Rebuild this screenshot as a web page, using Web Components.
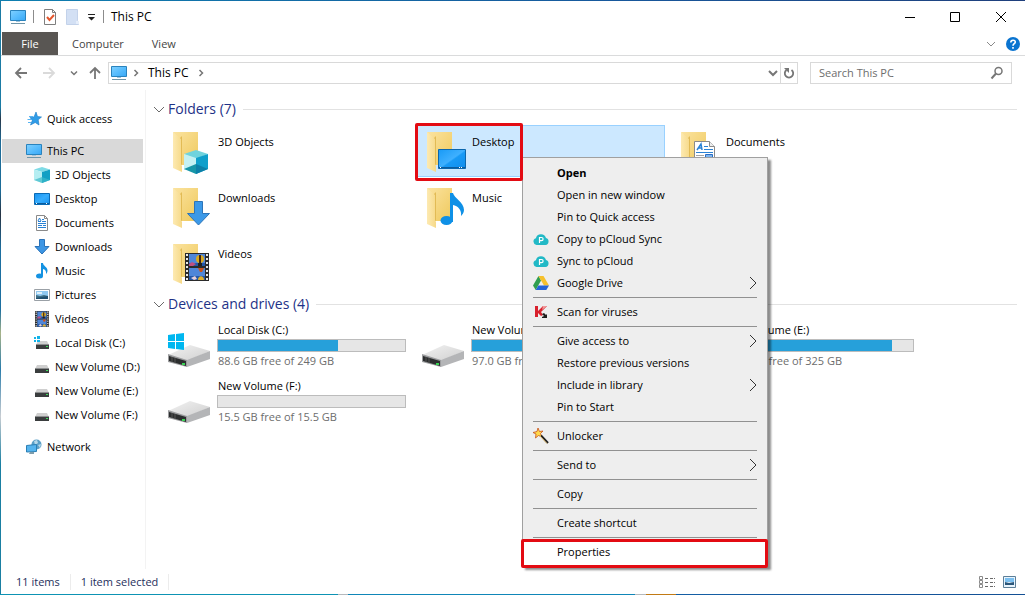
<!DOCTYPE html>
<html lang="en">
<head>
<meta charset="utf-8">
<meta name="viewport" content="width=device-width, initial-scale=1">
<title>This PC</title>
<style>
    body {
        margin: 0;
        font-family: "Open Sans", "Noto Sans", sans-serif;
        font-size: 11px;
        line-height: 16px;
        color: #000;
        background: #fff;
    }
</style>
</head>
<body>
<explorer-window>
    <title-bar slot="title">This PC</title-bar>
    <ribbon-tabs slot="ribbon"></ribbon-tabs>
    <address-row slot="address">This PC</address-row>

    <nav-pane slot="nav">
        <nav-item icon="star">Quick access</nav-item>
        <nav-item icon="pc" selected class="group">This PC</nav-item>
        <nav-item icon="cube" child>3D Objects</nav-item>
        <nav-item icon="desktop" child>Desktop</nav-item>
        <nav-item icon="document" child>Documents</nav-item>
        <nav-item icon="download" child>Downloads</nav-item>
        <nav-item icon="music" child>Music</nav-item>
        <nav-item icon="picture" child>Pictures</nav-item>
        <nav-item icon="video" child>Videos</nav-item>
        <nav-item icon="drive-win" child>Local Disk (C:)</nav-item>
        <nav-item icon="drive" child>New Volume (D:)</nav-item>
        <nav-item icon="drive" child>New Volume (E:)</nav-item>
        <nav-item icon="drive" child>New Volume (F:)</nav-item>
        <nav-item icon="network" class="group">Network</nav-item>
    </nav-pane>

    <item-group heading="Folders (7)">
        <folder-tile icon="f-cube">3D Objects</folder-tile>
        <folder-tile icon="f-desktop" selected>Desktop</folder-tile>
        <folder-tile icon="f-document">Documents</folder-tile>
        <folder-tile icon="f-download">Downloads</folder-tile>
        <folder-tile icon="f-music">Music</folder-tile>
        <folder-tile icon="f-picture">Pictures</folder-tile>
        <folder-tile icon="f-video">Videos</folder-tile>
    </item-group>
    <item-group heading="Devices and drives (4)">
        <drive-tile icon="big-drive-win" name="Local Disk (C:)" used="64">88.6 GB free of 249 GB</drive-tile>
        <drive-tile icon="big-drive" name="New Volume (D:)" used="70">97.0 GB free of 325 GB</drive-tile>
        <drive-tile icon="big-drive" name="New Volume (E:)" used="89">35.7 GB free of 325 GB</drive-tile>
        <drive-tile icon="big-drive" name="New Volume (F:)" used="0">15.5 GB free of 15.5 GB</drive-tile>
    </item-group>

    <status-bar slot="status">
        <span>11 items</span>
        <span>1 item selected</span>
    </status-bar>

    <context-menu slot="menu">
        <menu-item default>Open</menu-item>
        <menu-item>Open in new window</menu-item>
        <menu-item>Pin to Quick access</menu-item>
        <menu-item icon="pcloud">Copy to pCloud Sync</menu-item>
        <menu-item icon="pcloud">Sync to pCloud</menu-item>
        <menu-item icon="gdrive" submenu>Google Drive</menu-item>
        <hr>
        <menu-item icon="kaspersky">Scan for viruses</menu-item>
        <hr>
        <menu-item submenu>Give access to</menu-item>
        <menu-item>Restore previous versions</menu-item>
        <menu-item submenu>Include in library</menu-item>
        <menu-item>Pin to Start</menu-item>
        <hr>
        <menu-item icon="wand">Unlocker</menu-item>
        <hr>
        <menu-item submenu>Send to</menu-item>
        <hr>
        <menu-item>Copy</menu-item>
        <hr>
        <menu-item>Create shortcut</menu-item>
        <hr>
        <menu-item marked>Properties</menu-item>
    </context-menu>
</explorer-window>

<script>
// folder base shared by the 48px folder icons
const folder = `
    <defs>
        <linearGradient id="back" x1="0" y1="0" x2="1" y2="1"><stop offset="0" stop-color="#fbe3a0"/><stop offset="1" stop-color="#efc95c"/></linearGradient>
        <linearGradient id="front" x1="0" y1="0" x2="1" y2="0"><stop offset="0" stop-color="#fdeab2"/><stop offset="1" stop-color="#f6d988"/></linearGradient>
    </defs>
    <path fill="url(#back)" d="M9 4h25v33H17z"/>
    <path fill="#e2bb55" d="M16 10l2-2v29h-2z"/>
    <path fill="url(#front)" d="M9 4l8 7v25l1 2v6L9 40z"/>`;

const bigDrive = `
    <defs><linearGradient id="top" x1="0" y1="0" x2="1" y2="1"><stop offset="0" stop-color="#f2f2f2"/><stop offset="1" stop-color="#cfcfcf"/></linearGradient></defs>
    <path fill="url(#top)" d="M4 33L26 23l20 6-23 10z"/>
    <path fill="#b4b5b7" d="M23 38l23-9v8L23 45z"/>
    <path fill="#9b9c9e" d="M4 32l19 6v7L4 40z"/>
    <path fill="#2c2e2f" d="M5 34l17 5v5L5 39z"/>
    <path fill="#4e5152" d="M8 35v5M11 36v5" stroke="#555"/>
    <path fill="#39d353" d="M18 41h3v2h-3z"/>`;

const winLogo = '<path fill="#00b7f0" d="M4 13l7-1v7H4zM12 12l8-1v8h-8zM4 20h7v7l-7-1zM12 20h8v8l-8-1z"/>';

const film = `
    <path fill="#2b2b2b" d="M0 0h24v28H0z"/>
    <path fill="#4f86d8" d="M4 1h16v12H4zM4 15h16v12H4z"/>
    <path fill="#2458a8" d="M4 10h16v3H4zM4 23h16v4H4z"/>
    <circle cx="15" cy="6" r="4" fill="#d8a820"/><path fill="#3a2418" d="M14 2h2v8h-2z"/><path fill="#222" d="M13 10h4v3h-4z"/>
    <path fill="#c8541c" d="M13 15h6l-2 4h-2z"/><path fill="#e0b030" d="M13 27c0-5 6-5 6 0z"/>
    <path fill="#c05080" d="M4 11l3-2 4 2-3 2H4z"/><path fill="#e8d0d8" d="M6 25l4-2 2 3-3 1z"/>
    <path stroke="#e9e9e9" stroke-width="2" stroke-dasharray="2 2" d="M2 1v27M22 1v27"/>`;

const ICONS = {
    pc: [16, `
        <defs><linearGradient id="g" x1="0" y1="0" x2="1" y2="1"><stop offset="0" stop-color="#7fd0ff"/><stop offset=".5" stop-color="#59bdfd"/><stop offset="1" stop-color="#38a7f5"/></linearGradient></defs>
        <path fill="url(#g)" stroke="#2a83bd" d="M.5 1.500h15v10H.5z"/>
        <path fill="#9fc4dc" d="M6 12h4v1H6z"/><path fill="#6f95a8" d="M1 14h14v1H1z"/>`],
    star: [16, `
        <path fill="#2f9de8" stroke="#1a79c4" stroke-width=".6" d="M10 1l1.500 4.500 4 .5-3.300 2.800.8 5.200-3.800-2.500L4.500 14l1.800-4.500L4 6.500l4-.5z"/>
        <path fill="none" stroke="#56b4f2" d="M3 5.500h4M1.500 8.500h4M2 11.500h3"/>`],
    cube: [16, `
        <path fill="#7fdbe6" d="M8 0l8 2.500L8 5 0 2.500z"/><path fill="#b5eef2" d="M0 2.500L8 5v11l-8-3z"/>
        <path fill="#12a0c4" d="M16 2.500L8 5v11l8-3z"/><path fill="#3cb9c9" d="M0 13l8-3v6zM8 10l8 3-8 3z" opacity=".7"/>`],
    desktop: [16, `
        <defs><linearGradient id="g" x1="0" y1="0" x2="1" y2="1"><stop offset="0" stop-color="#1792f0"/><stop offset=".5" stop-color="#36adfd"/><stop offset="1" stop-color="#1792f0"/></linearGradient></defs>
        <path fill="url(#g)" stroke="#0a6bb5" d="M.5 2.500h15v11H.5z"/><path fill="#0a5c9c" d="M1 12h14v1H1z"/><path fill="#fff" d="M2 12h1v1H2zM12 12h1v1h-1z"/>`],
    document: [16, `
        <path fill="#fff" stroke="#8a8a8a" d="M2.500.5h8l3 3v12h-11z"/><path fill="none" stroke="#8a8a8a" d="M10.500.5v3h3"/>
        <path stroke="#2a82d4" d="M4 6.500h3M8 4.500h2M8 6.500h4M4 8.500h8M4 10.500h4M9 10.500h3M4 12.500h8"/><path fill="none" stroke="#2a82d4" d="M4 6l1.500-3L7 6"/>`],
    download: [16, '<path fill="#3d96e4" stroke="#2a72b8" d="M5.500.5h5v7h4.500L8 15 1 7.500h4.500z"/>'],
    music: [16, '<ellipse cx="5.500" cy="13" rx="3.500" ry="2.500" fill="#1492e2"/><path fill="#1492e2" d="M7 0h2c0 3 5 4 4.500 8-.2 1.500-1 2.500-1.500 3 .5-3-1-4.500-3-5v7H7z"/>'],
    picture: [16, `
        <path fill="#fff" stroke="#9aa0a6" d="M.5 2.500h15v11H.5z"/><path fill="#8fc8f0" d="M2 4h12v8H2z"/>
        <path fill="#dff1fb" d="M3 5h5v2H3z"/><path fill="#3e6f86" d="M2 8l4 1 4-1 4 1v3H2z"/><path fill="#1f4f70" d="M2 11l12-2v3H2z"/>`],
    video: [16, `<g transform="translate(1 0) scale(.58 .57)">${film}</g>`],
    drive: [16, `
        <path fill="#cfcfcf" d="M3 6h10l2 4H1z"/><path fill="#3a3d3e" d="M1 10h14v4H1z"/>
        <path fill="#8d8f90" d="M1 9h14v1H1z"/><path fill="#3fdc5c" d="M12 11h2v1h-2z"/>`],
    'drive-win': [16, `
        <path fill="#cfcfcf" d="M4 6h9l2 4H2z"/><path fill="#3a3d3e" d="M2 10h13v4H2z"/>
        <path fill="#8d8f90" d="M2 9h13v1H2z"/><path fill="#3fdc5c" d="M12 11h2v1h-2z"/>
        <path fill="#12b3e8" d="M0 2h2v2H0zM3 1h3v3H3zM0 5h2v2H0zM3 5h3v2H3z"/>`],
    network: [16, `
        <circle cx="10.500" cy="5.500" r="5" fill="#5b9fc6"/><path fill="#b6d9ea" d="M8 2l3-1 1 3-3 2zM12 6l3-1-1 4z"/>
        <path fill="#55b4ee" stroke="#2b7fb4" d="M.5 6.500l10-1v7l-10 .5z"/><path fill="#7f9dac" d="M4 13h4v2H3z"/>`],
    check: [16, '<path fill="#fff" stroke="#7e7e7e" d="M2.500.5h8l3 3v12h-11z"/><path fill="none" stroke="#7e7e7e" d="M10.500.5v3h3"/><path fill="none" stroke="#e4572e" stroke-width="2" d="M5 8l2.500 3L12 6"/>'],
    blank: [16, '<path fill="#d3e0f4" stroke="#c3d2ea" d="M1.500.5h11v11l1 1v3h-12z"/><path fill="#e6eefa" d="M11 12h3v3h-3z"/>'],
    customize: [8, '<path fill="#222" d="M0 1h7v1H0zM0 4h7L3.500 7.500z"/>'],
    back: [14, '<path fill="none" stroke="#767676" stroke-width="1.800" d="M7 2L2 7l5 5M2 7h11"/>'],
    forward: [14, '<path fill="none" stroke="#dadada" stroke-width="1.800" d="M7 2l5 5-5 5M12 7H1"/>'],
    up: [14, '<path fill="none" stroke="#767676" stroke-width="1.800" d="M2 7l5-5 5 5M7 2v11"/>'],
    down: [10, '<path fill="none" stroke="#767676" stroke-width="2" d="M1 3l4 4 4-4"/>'],
    'down-small': [8, '<path fill="none" stroke="#767676" stroke-width="1.500" d="M1 2.500l3 3 3-3"/>'],
    'down-thin': [10, '<path fill="none" stroke="#8a8a8a" d="M1 3l4 4 4-4"/>'],
    'group-arrow': [12, '<path fill="none" stroke="#6a6a6a" d="M1 4l5 5 5-5"/>'],
    crumb: [8, '<path fill="none" stroke="#767676" stroke-width="1.500" d="M2.500 1l3 3-3 3"/>'],
    refresh: [12, '<path fill="none" stroke="#767676" stroke-width="1.800" d="M8.500 3A4.200 4.200 0 1 1 3.500 3"/><path fill="#767676" d="M1 1h5v5z"/>'],
    search: [14, '<circle cx="8.500" cy="5" r="3.500" fill="none" stroke="#767676" stroke-width="1.500"/><path stroke="#767676" stroke-width="2" d="M6 7.500L1.500 12.500"/>'],
    help: [14, '<circle cx="7" cy="7" r="7" fill="#0a74d0"/><path fill="none" stroke="#fff" stroke-width="1.600" d="M4.800 5.500c0-3 4.500-3 4.500-.5C9.300 6.800 7 6.600 7 8.800M7 10v1.800"/>'],
    minimize: [12, '<path fill="#000" d="M1 6h10v1H1z"/>'],
    maximize: [12, '<path fill="none" stroke="#000" d="M.5 1.500h9v9h-9z"/>'],
    close: [12, '<path fill="none" stroke="#000" d="M0 1l10 10M10 1L0 11"/>'],
    submenu: [14, '<path fill="none" stroke="#333" d="M4 1l6 6-6 6"/>'],
    pcloud: [16, '<path fill="#22b9c6" d="M3.500 14a3.500 3.500 0 0 1-.6-6.800A5.200 5.200 0 0 1 13 7a3.600 3.600 0 0 1-.5 7z"/><path fill="none" stroke="#fff" stroke-width="1.200" d="M6.500 12V6.500h2a1.600 1.600 0 0 1 0 3.200h-2"/>'],
    gdrive: [16, '<path fill="#2f9e4f" d="M5.500 1L8 5.500 2.700 15 0 10.500z"/><path fill="#f6c02c" d="M5.500 1h5L16 10.500h-5z"/><path fill="#2463d8" d="M5.300 10.500H16L13.300 15H2.700z"/>'],
    kaspersky: [16, '<path fill="#d8202c" d="M2 2h3v5l5-5h4L8 8l2 3-2 1-3-3v4H2z"/><path fill="#f29a9a" d="M10 2h4L9 6z"/><path fill="#1e1e1e" d="M9 13l2-1-2-2 2-1 2 2 1-1v4H9z"/>'],
    wand: [16, '<path fill="#ffd84a" stroke="#c8501c" stroke-width=".8" d="M5 0l1.500 3.500L10 3 7.500 5.500 9 9 5.500 7.500 2.500 10l.5-4L0 4.500l4-1z"/><path stroke="#222" stroke-width="2" d="M8 7.500L15 15"/><path stroke="#d7b46a" d="M7 8l7 7.500"/>'],
    details: [16, '<path fill="none" stroke="#8a8a8a" d="M.5 2.500h3v3h-3zM.5 6.500h3v3h-3zM.5 10.500h3v3h-3z"/><path stroke="#6a6a6a" stroke-dasharray="3 1" d="M6 4.500h4M11 4.500h5M6 8.500h4M11 8.500h5M6 12.500h4M11 12.500h5"/>'],
    thumbs: [16, '<path fill="#e8f4fd" stroke="#5d7f98" d="M1.500 2.500h12v11h-12z"/><path fill="#7cc0f0" d="M3 4h9v4H3z"/><path fill="#2b567a" d="M3 8l4 1 5-1v3H3z"/>'],

    'f-cube': [48, folder + `
        <path fill="#6fd3dd" d="M32 22l12 4-12 5-12-5z"/><path fill="#c4f1f3" d="M20 26l12 4v9l-12 3z"/>
        <path fill="#0f9fcb" d="M44 26l-12 4v16l12-5z"/><path fill="#1796a8" d="M20 41l12-5v10z"/><path fill="#0c80a8" d="M32 36l12 5-12 5z"/>`],
    'f-desktop': [48, folder + `
        <defs><linearGradient id="g" x1="0" y1="0" x2="1" y2="1"><stop offset="0" stop-color="#189af6"/><stop offset=".5" stop-color="#3fb0ff"/><stop offset=".55" stop-color="#189af6"/><stop offset="1" stop-color="#0f8cec"/></linearGradient></defs>
        <path fill="url(#g)" stroke="#0b66ad" d="M20.500 21.500h27v19h-27z"/><path fill="#0b5c9e" d="M21 39h26v1H21z"/><path fill="#fff" d="M22 39h1v1h-1zM41 39h1v1h-1zM43 39h1v1h-1z"/>`],
    'f-document': [48, folder + `
        <path fill="#fff" stroke="#8a8a8a" d="M22.500 13.500h15l5 5v26h-20z"/><path fill="#eee" stroke="#8a8a8a" d="M37.500 13.500v5h5"/>
        <path fill="none" stroke="#2a82d4" stroke-width="1.500" d="M25 22l4-6 1 6M26 20h4"/><path stroke="#2a82d4" d="M32 18.500h4M32 21.500h9M24 24.500h17M24 30.500h17M24 33.500h17M24 36.500h17"/><path stroke="#a5a5a5" d="M24 27.500h8"/><path fill="#7db5ee" stroke="#2a6cc4" d="M33.500 26.500h7v4h-7z"/>`],
    'f-download': [48, folder + '<path fill="#3b99e8" stroke="#2d74b8" d="M30.500 17.500h8v12h7L34.500 41l-11-11.500h7z"/>'],
    'f-music': [48, folder + '<ellipse cx="28.500" cy="36.500" rx="6" ry="4.500" fill="#0f90e6"/><path fill="#0f90e6" d="M32 9h3c1 5 11 9 11 17 0 3-2 5-3 6 1-6-3-10-8-11v17h-3z"/>'],
    'f-picture': [48, folder + '<path fill="#fff" stroke="#9aa0a6" d="M20.500 21.500h26v19h-26z"/><path fill="#8fc8f0" d="M22 23h23v9H22z"/><path fill="#3e6f86" d="M22 31h23v8H22z"/>'],
    'f-video': [48, folder + `<g transform="translate(21 13)">${film}</g>`],
    'big-drive': [48, bigDrive],
    'big-drive-win': [48, bigDrive + winLogo]
};

function svg(name) {
    const [size, shapes] = ICONS[name];
    return `<svg width="${size}" height="${size}" viewBox="0 0 ${size} ${size}" aria-hidden="true">${shapes}</svg>`;
}

class UiIcon extends HTMLElement {
    constructor() {
        super();
        this.attachShadow({ mode: 'open' });
    }

    connectedCallback() {
        this.shadowRoot.innerHTML = `
            <style>
                :host { display: inline-flex; flex: none; }
                svg { display: block; }
            </style>
            ${svg(this.getAttribute('name'))}
        `;
    }
}

class ExplorerWindow extends HTMLElement {
    constructor() {
        super();
        this.attachShadow({ mode: 'open' });
    }

    connectedCallback() {
        this.shadowRoot.innerHTML = `
            <style>
                /* the desktop shows through as a thin line on three sides */
                :host {
                    display: flex;
                    flex-direction: column;
                    position: relative;
                    box-sizing: border-box;
                    min-height: 100vh;
                    padding: 1px 0 1px 1px;
                    background:
                        linear-gradient(90deg, #0e7fb0, #17589c 60%, #1f3f7c) top / 100% 1px no-repeat,
                        linear-gradient(90deg, #0d93b4 0 33%, #b5b9bd 33% 34%, #0f86b8 34% 62%, #b5b9bd 62% 63%, #c27a14 63% 66%, #155fa5 66%, #134f94) bottom / 100% 1px no-repeat,
                        linear-gradient(#1b7ba4 0 18%, #27374a 20%, #1d6c98 24% 32%, #263242 36%, #1d6fa0 42% 52%, #a9b489 56%, #2a7cab 62%, #c8cdd2 70%, #1a7fa2 78%) left / 1px 100% no-repeat,
                        #fff;
                }
                .body {
                    display: flex;
                    flex: 1;
                }
                main {
                    flex: 1;
                    min-width: 0;
                    padding: 8px 8px 8px 7px;
                }
            </style>
            <slot name="title"></slot>
            <slot name="ribbon"></slot>
            <slot name="address"></slot>
            <div class="body">
                <slot name="nav"></slot>
                <main><slot></slot></main>
            </div>
            <slot name="status"></slot>
            <slot name="menu"></slot>
        `;
    }
}

class TitleBar extends HTMLElement {
    constructor() {
        super();
        this.attachShadow({ mode: 'open' });
    }

    connectedCallback() {
        this.shadowRoot.innerHTML = `
            <style>
                :host {
                    display: flex;
                    align-items: center;
                    height: 31px;
                    padding-left: 9px;
                    font-size: 12px;
                }
                button {
                    display: flex;
                    align-items: center;
                    justify-content: center;
                    padding: 0;
                    border: none;
                    background: none;
                }
                .quick {
                    display: flex;
                    align-items: center;
                    gap: 7px;
                    margin-right: 7px;
                }
                .line {
                    width: 1px;
                    height: 13px;
                    background: #8c8c8c;
                }
                .line:first-of-type { margin-right: 1px; }
                .controls {
                    display: flex;
                    margin-left: auto;
                }
                .controls button {
                    width: 46px;
                    height: 30px;
                }
            </style>
            <div class="quick">
                <ui-icon name="pc"></ui-icon>
                <span class="line"></span>
                <button aria-label="Properties"><ui-icon name="check"></ui-icon></button>
                <button aria-label="New folder"><ui-icon name="blank"></ui-icon></button>
                <button aria-label="Customize toolbar"><ui-icon name="customize"></ui-icon></button>
                <span class="line"></span>
            </div>
            <slot></slot>
            <div class="controls">
                <button aria-label="Minimize"><ui-icon name="minimize"></ui-icon></button>
                <button aria-label="Maximize"><ui-icon name="maximize"></ui-icon></button>
                <button aria-label="Close"><ui-icon name="close"></ui-icon></button>
            </div>
        `;
    }
}

class RibbonTabs extends HTMLElement {
    constructor() {
        super();
        this.attachShadow({ mode: 'open' });
    }

    connectedCallback() {
        this.shadowRoot.innerHTML = `
            <style>
                :host {
                    display: flex;
                    align-items: center;
                    height: 23px;
                    padding: 0 5px 0 1px;
                    border-bottom: 1px solid #dadbdc;
                }
                button {
                    height: 23px;
                    padding: 0 14px;
                    border: none;
                    background: none;
                    font: inherit;
                    color: #444;
                }
                .file {
                    width: 56px;
                    background: #595653;
                    color: #fff;
                }
                .right {
                    display: flex;
                    align-items: center;
                    gap: 10px;
                    margin-left: auto;
                }
                .right button {
                    display: flex;
                    align-items: center;
                    padding: 0;
                }
            </style>
            <button class="file">File</button>
            <button>Computer</button>
            <button>View</button>
            <div class="right">
                <button aria-label="Expand the ribbon"><ui-icon name="down-thin"></ui-icon></button>
                <button aria-label="Help"><ui-icon name="help"></ui-icon></button>
            </div>
        `;
    }
}

class AddressRow extends HTMLElement {
    constructor() {
        super();
        this.attachShadow({ mode: 'open' });
    }

    connectedCallback() {
        this.shadowRoot.innerHTML = `
            <style>
                :host {
                    display: flex;
                    align-items: center;
                    height: 34px;
                    padding: 0 13px;
                }
                button {
                    display: flex;
                    align-items: center;
                    padding: 0;
                    border: none;
                    background: none;
                }
                .history {
                    display: flex;
                    align-items: center;
                    gap: 14px;
                    width: 94px;
                }
                .history button:nth-child(n+3) { margin-right: -4px; }
                .box {
                    display: flex;
                    align-items: center;
                    box-sizing: border-box;
                    height: 22px;
                    border: 1px solid #d9d9d9;
                }
                .address {
                    flex: 1;
                    gap: 8px;
                    padding-left: 2px;
                    font-size: 12px;
                }
                .address > :first-child { margin-right: -3px; }
                .tools {
                    display: flex;
                    align-self: stretch;
                    margin-left: auto;
                }
                .tools button { padding: 0 2px; }
                .tools .refresh {
                    border-left: 1px solid #d9d9d9;
                }
                .search {
                    width: 202px;
                    margin-left: 12px;
                    padding: 0 7px 0 8px;
                }
                input {
                    flex: 1;
                    min-width: 0;
                    padding: 0;
                    border: none;
                    outline: none;
                    background: none;
                    font: inherit;
                    color: #000;
                }
                input::placeholder { color: #6d6d6d; }
            </style>
            <div class="history">
                <button aria-label="Back"><ui-icon name="back"></ui-icon></button>
                <button aria-label="Forward"><ui-icon name="forward"></ui-icon></button>
                <button aria-label="Recent locations"><ui-icon name="down-small"></ui-icon></button>
                <button aria-label="Up"><ui-icon name="up"></ui-icon></button>
            </div>
            <div class="box address">
                <ui-icon name="pc"></ui-icon>
                <ui-icon name="crumb"></ui-icon>
                <slot></slot>
                <ui-icon name="crumb"></ui-icon>
                <div class="tools">
                    <button aria-label="Previous locations"><ui-icon name="down"></ui-icon></button>
                    <button class="refresh" aria-label="Refresh"><ui-icon name="refresh"></ui-icon></button>
                </div>
            </div>
            <label class="box search">
                <input type="text" placeholder="Search This PC" aria-label="Search This PC">
                <ui-icon name="search"></ui-icon>
            </label>
        `;
    }
}

class NavPane extends HTMLElement {
    constructor() {
        super();
        this.attachShadow({ mode: 'open' });
    }

    connectedCallback() {
        this.shadowRoot.innerHTML = `
            <style>
                :host {
                    display: block;
                    flex: none;
                    box-sizing: border-box;
                    width: 145px;
                    padding: 17px 2px 0 1px;
                    border-right: 1px solid #f3f3f3;
                }
                ::slotted(.group) { margin-top: 8px; }
            </style>
            <slot></slot>
        `;
    }
}

class NavItem extends HTMLElement {
    constructor() {
        super();
        this.attachShadow({ mode: 'open' });
    }

    connectedCallback() {
        this.shadowRoot.innerHTML = `
            <style>
                :host { display: block; }
                a {
                    display: flex;
                    align-items: center;
                    gap: 5px;
                    height: 24px;
                    padding-left: 24px;
                    color: inherit;
                    text-decoration: none;
                    white-space: nowrap;
                }
                :host([child]) a { padding-left: 32px; }
                :host([selected]) a { background: #d9d9d9; }
            </style>
            <a href="#">
                <ui-icon name="${this.getAttribute('icon')}"></ui-icon>
                <slot></slot>
            </a>
        `;
    }
}

class ItemGroup extends HTMLElement {
    constructor() {
        super();
        this.attachShadow({ mode: 'open' });
    }

    connectedCallback() {
        this.shadowRoot.innerHTML = `
            <style>
                :host { display: block; }
                :host(:not(:first-of-type)) { margin-top: 4px; }
                h2 {
                    display: flex;
                    align-items: center;
                    gap: 3px;
                    height: 22px;
                    margin: 0 0 5px;
                    font-size: 14px;
                    font-weight: 400;
                    color: #1e3287;
                }
                h2::after {
                    content: "";
                    flex: 1;
                    height: 1px;
                    margin-left: 4px;
                    background: #e2e2e2;
                }
                .grid {
                    display: grid;
                    grid-template-columns: repeat(auto-fill, 250px);
                    gap: 4px;
                    padding-left: 8px;
                }
            </style>
            <h2><ui-icon name="group-arrow"></ui-icon>${this.getAttribute('heading')}</h2>
            <div class="grid"><slot></slot></div>
        `;
    }
}

class FolderTile extends HTMLElement {
    constructor() {
        super();
        this.attachShadow({ mode: 'open' });
    }

    connectedCallback() {
        this.shadowRoot.innerHTML = `
            <style>
                :host {
                    display: flex;
                    gap: 6px;
                    box-sizing: border-box;
                    height: 52px;
                    padding: 3px;
                }
                span { padding-top: 6px; }
                :host([selected]) {
                    position: relative;
                    background: #cce8ff;
                    box-shadow: inset 0 0 0 1px #99d1ff;
                }
                /* red marker around the icon and its name */
                :host([selected])::after {
                    content: "";
                    position: absolute;
                    z-index: 3;
                    top: -2px;
                    left: 0;
                    box-sizing: border-box;
                    width: 108px;
                    height: 58px;
                    border: 3px solid #e30b13;
                    border-radius: 2px;
                }
            </style>
            <ui-icon name="${this.getAttribute('icon')}"></ui-icon>
            <span><slot></slot></span>
        `;
    }
}

class DriveTile extends HTMLElement {
    constructor() {
        super();
        this.attachShadow({ mode: 'open' });
    }

    connectedCallback() {
        const name = this.getAttribute('name');
        this.shadowRoot.innerHTML = `
            <style>
                :host {
                    display: flex;
                    gap: 5px;
                    box-sizing: border-box;
                    height: 52px;
                    padding: 2px 5px 2px 3px;
                }
                .info {
                    flex: 1;
                    display: flex;
                    flex-direction: column;
                }
                label, .free { padding-left: 1px; }
                .free { color: #6d6d6d; }
                progress {
                    appearance: none;
                    display: block;
                    box-sizing: border-box;
                    width: 100%;
                    height: 13px;
                    margin: 1px 0;
                    border: 1px solid #bcbcbc;
                    background: #e6e6e6;
                }
                progress::-webkit-progress-bar { background: #e6e6e6; }
                progress::-webkit-progress-value { background: #26a0da; }
            </style>
            <ui-icon name="${this.getAttribute('icon')}"></ui-icon>
            <div class="info">
                <label for="used">${name}</label>
                <progress id="used" max="100" value="${this.getAttribute('used')}"></progress>
                <span class="free"><slot></slot></span>
            </div>
        `;
    }
}

class StatusBar extends HTMLElement {
    constructor() {
        super();
        this.attachShadow({ mode: 'open' });
    }

    connectedCallback() {
        this.shadowRoot.innerHTML = `
            <style>
                :host {
                    display: flex;
                    align-items: center;
                    height: 25px;
                    padding: 0 7px 0 5px;
                    color: #1e2f5c;
                }
                ::slotted(span) {
                    padding: 0 10px;
                    border-right: 1px solid #ececec;
                }
                .views {
                    display: flex;
                    gap: 7px;
                    margin-left: auto;
                }
                button {
                    display: flex;
                    padding: 0;
                    border: none;
                    background: none;
                }
            </style>
            <slot></slot>
            <div class="views">
                <button aria-label="Details view"><ui-icon name="details"></ui-icon></button>
                <button aria-label="Tiles view"><ui-icon name="thumbs"></ui-icon></button>
            </div>
        `;
    }
}

class ContextMenu extends HTMLElement {
    constructor() {
        super();
        this.attachShadow({ mode: 'open' });
    }

    connectedCallback() {
        this.shadowRoot.innerHTML = `
            <style>
                :host {
                    display: block;
                    position: absolute;
                    z-index: 2;
                    top: 157px;
                    left: 522px;
                    box-sizing: border-box;
                    width: 246px;
                    padding: 4px 0 3px;
                    border: 1px solid #a0a0a0;
                    background: #eee;
                    box-shadow: 3px 3px 2px rgba(0, 0, 0, 0.45);
                }
                ::slotted(hr) {
                    height: 1px;
                    margin: 3px 10px;
                    border: none;
                    background: #919191;
                }
            </style>
            <slot></slot>
        `;
    }
}

class MenuItem extends HTMLElement {
    constructor() {
        super();
        this.attachShadow({ mode: 'open' });
    }

    connectedCallback() {
        const icon = this.getAttribute('icon');
        this.shadowRoot.innerHTML = `
            <style>
                :host { display: block; }
                button {
                    display: grid;
                    grid-template-columns: 16px 1fr 14px;
                    align-items: center;
                    gap: 8px;
                    width: 100%;
                    height: 22px;
                    padding: 0 7px 0 10px;
                    border: none;
                    background: none;
                    font: inherit;
                    color: inherit;
                    text-align: left;
                }
                .icon { display: flex; }
                :host([default]) button { font-weight: 700; }
                :host([marked]), :host([marked]) button { position: relative; }
                /* red marker over the full width of the menu */
                :host([marked])::before {
                    content: "";
                    position: absolute;
                    inset: -2px -1px -5px -2px;
                    border: 3px solid #e30b13;
                    border-radius: 2px;
                    background: #fff;
                }
            </style>
            <button>
                <span class="icon">${icon ? `<ui-icon name="${icon}"></ui-icon>` : ''}</span>
                <slot></slot>
                ${this.hasAttribute('submenu') ? '<ui-icon name="submenu"></ui-icon>' : ''}
            </button>
        `;
    }
}

customElements.define('ui-icon', UiIcon);
customElements.define('explorer-window', ExplorerWindow);
customElements.define('title-bar', TitleBar);
customElements.define('ribbon-tabs', RibbonTabs);
customElements.define('address-row', AddressRow);
customElements.define('nav-pane', NavPane);
customElements.define('nav-item', NavItem);
customElements.define('item-group', ItemGroup);
customElements.define('folder-tile', FolderTile);
customElements.define('drive-tile', DriveTile);
customElements.define('status-bar', StatusBar);
customElements.define('context-menu', ContextMenu);
customElements.define('menu-item', MenuItem);
</script>
</body>
</html>
